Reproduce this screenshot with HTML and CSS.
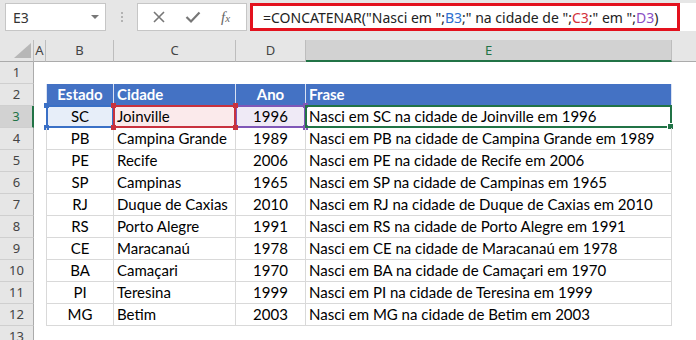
FILE: index.html
```html
<!DOCTYPE html>
<html lang="pt">
<head>
    <meta charset="UTF-8">
    <title>CONCATENAR</title>
    <link rel="stylesheet" href="styles.css">
</head>
<body>
<div class="formula-bar">
    <div class="name-box"><span>E3</span><span class="caret"></span></div>
    <div class="grip"><i></i><i></i><i></i></div>
    <div class="fx-buttons">
        <svg width="14" height="14" viewBox="0 0 14 14"><path d="M2 2 L12 12 M12 2 L2 12" stroke="#777" stroke-width="1.6" fill="none"/></svg>
        <svg width="16" height="14" viewBox="0 0 16 14"><path d="M1.5 7 L6 11.5 L14.5 2.5" stroke="#777" stroke-width="2.2" fill="none"/></svg>
        <span class="fx">f<small>x</small></span>
    </div>
    <div class="formula">
        <div class="formula-text">=CONCATENAR("Nasci em ";<span class="fref-b">B3</span>;" na cidade de ";<span class="fref-c">C3</span>;" em ";<span class="fref-d">D3</span>)</div>
    </div>
</div>

<div class="sheet">
    <!-- column headers -->
    <div class="ch corner"></div>
    <div class="ch">A</div>
    <div class="ch">B</div>
    <div class="ch">C</div>
    <div class="ch">D</div>
    <div class="ch sel">E</div>
    <div class="ch last"></div>

    <div class="rh">1</div><div></div><div></div><div></div><div></div><div></div><div></div>

    <div class="rh">2</div><div></div>
    <div class="t th center first">Estado</div>
    <div class="t th">Cidade</div>
    <div class="t th center">Ano</div>
    <div class="t th">Frase</div>
    <div></div>

    <div class="rh sel">3</div><div></div>
    <div class="t center first ref ref-b">SC</div>
    <div class="t ref ref-c">Joinville</div>
    <div class="t center ref ref-d">1996</div>
    <div class="t active">Nasci em SC na cidade de Joinville em 1996</div>
    <div></div>

    <div class="rh">4</div><div></div>
    <div class="t center first">PB</div><div class="t">Campina Grande</div><div class="t center">1989</div>
    <div class="t">Nasci em PB na cidade de Campina Grande em 1989</div><div></div>

    <div class="rh">5</div><div></div>
    <div class="t center first">PE</div><div class="t">Recife</div><div class="t center">2006</div>
    <div class="t">Nasci em PE na cidade de Recife em 2006</div><div></div>

    <div class="rh">6</div><div></div>
    <div class="t center first">SP</div><div class="t">Campinas</div><div class="t center">1965</div>
    <div class="t">Nasci em SP na cidade de Campinas em 1965</div><div></div>

    <div class="rh">7</div><div></div>
    <div class="t center first">RJ</div><div class="t">Duque de Caxias</div><div class="t center">2010</div>
    <div class="t">Nasci em RJ na cidade de Duque de Caxias em 2010</div><div></div>

    <div class="rh">8</div><div></div>
    <div class="t center first">RS</div><div class="t">Porto Alegre</div><div class="t center">1991</div>
    <div class="t">Nasci em RS na cidade de Porto Alegre em 1991</div><div></div>

    <div class="rh">9</div><div></div>
    <div class="t center first">CE</div><div class="t">Maracanaú</div><div class="t center">1978</div>
    <div class="t">Nasci em CE na cidade de Maracanaú em 1978</div><div></div>

    <div class="rh">10</div><div></div>
    <div class="t center first">BA</div><div class="t">Camaçari</div><div class="t center">1970</div>
    <div class="t">Nasci em BA na cidade de Camaçari em 1970</div><div></div>

    <div class="rh">11</div><div></div>
    <div class="t center first">PI</div><div class="t">Teresina</div><div class="t center">1999</div>
    <div class="t">Nasci em PI na cidade de Teresina em 1999</div><div></div>

    <div class="rh">12</div><div></div>
    <div class="t center first">MG</div><div class="t">Betim</div><div class="t center">2003</div>
    <div class="t">Nasci em MG na cidade de Betim em 2003</div><div></div>

    <div class="rh">13</div><div></div><div></div><div></div><div></div><div></div><div></div>
</div>
</body>
</html>
```

FILE: styles.css
```css
* { box-sizing: border-box; }
body { margin: 0; background: #fff; font-family: "Noto Sans", sans-serif; overflow: hidden; }

/* formula bar */
.formula-bar { display: flex; height: 40px; background: #e6e6e6; padding: 3px 0 9px 5px; }
.name-box {
    width: 101px; background: #fff; border: 1px solid #c6c6c6;
    display: flex; align-items: center; justify-content: space-between;
    padding: 0 6px 0 7px; font-size: 14px; color: #333;
}
.caret { width: 0; height: 0; border-left: 4px solid transparent; border-right: 4px solid transparent; border-top: 4px solid #777; }
.grip { width: 31px; display: flex; flex-direction: column; align-items: center; justify-content: center; gap: 2px; }
.grip i { display: block; width: 2px; height: 2px; background: #b3b3b3; }
.fx-buttons {
    width: 110px; background: #fff; border: 1px solid #c6c6c6;
    display: flex; align-items: center; justify-content: space-around; padding: 0 6px 0 4px;
}
.fx { font-family: "Liberation Serif", serif; font-style: italic; font-size: 15px; color: #666; }
.fx small { font-size: 11px; }
.formula { flex: 1; margin-left: 3px; background: #fff; }
.formula-text {
    width: 430px; height: 100%; border: 3px solid #e3121e;
    display: flex; align-items: center; padding-left: 10px;
    font-size: 14px; color: #222; white-space: nowrap;
}
.fref-b { color: #2e6fd0; }
.fref-c { color: #d32f3a; }
.fref-d { color: #8a4fc6; }

/* sheet */
.sheet {
    display: grid;
    grid-template-columns: 34px 12px 68px 122px 70px 366px 1fr;
    grid-auto-rows: 22px;
    font-family: "Lato", sans-serif; font-size: 15px; color: #000;
}
.ch {
    background: #e6e6e6; border-right: 1px solid #bdbdbd; border-bottom: 1px solid #ababab;
    text-align: center; font-family: "Noto Sans", sans-serif; font-size: 13px; color: #444; line-height: 21px;
}
.ch.last { border-right: none; }
.ch.sel { background: #d2d2d2; color: #217346; border-bottom: 2px solid #217346; }
.corner { position: relative; }
.corner::after {
    content: ""; position: absolute; right: 2px; bottom: 3px;
    border-left: 17px solid transparent; border-bottom: 15px solid #b7b7b7;
}
.rh {
    background: #e6e6e6; border-right: 1px solid #ababab; border-bottom: 1px solid #cfcfcf;
    text-align: center; font-family: "Noto Sans", sans-serif; font-size: 13px; color: #444; line-height: 21px;
}
.rh.sel { background: #d2d2d2; color: #217346; border-right: 2px solid #217346; }

.t {
    border-right: 1px solid #d9d9d9; border-bottom: 1px solid #d9d9d9;
    padding: 0 3px; line-height: 21px; white-space: nowrap; position: relative;
}
.t.first { border-left: 1px solid #d9d9d9; }
.t.center { text-align: center; }
.t.th { background: #4472c4; color: #fff; font-weight: bold; border-color: #d9e1f2; }

/* formula reference highlights */
.ref-b { --c: #3a70c6; background: #e7eef9; }
.ref-c { --c: #c8323e; background: #fbeaeb; }
.ref-d { --c: #7f57b7; background: #efeaf6; }
.t.ref::before { content: ""; position: absolute; inset: -1px; border: 2px solid var(--c); }
.t.ref::after {
    content: ""; position: absolute; inset: -3px;
    background:
        linear-gradient(var(--c), var(--c)) left top / 5px 5px no-repeat,
        linear-gradient(var(--c), var(--c)) right top / 5px 5px no-repeat,
        linear-gradient(var(--c), var(--c)) left bottom / 5px 5px no-repeat,
        linear-gradient(var(--c), var(--c)) right bottom / 5px 5px no-repeat;
}
.t.ref-c { z-index: 1; }
.t.active::before { content: ""; position: absolute; inset: -1px; border: 2px solid #217346; }
.t.active::after { content: ""; position: absolute; right: -3px; bottom: -3px; width: 5px; height: 5px; background: #217346; border: 1px solid #fff; }
```
